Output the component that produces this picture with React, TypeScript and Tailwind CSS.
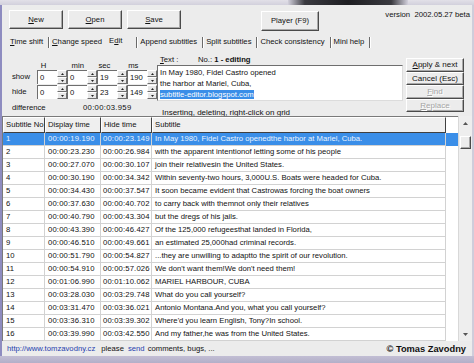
import React from "react";

const rows: [string, string, string, string][] = [
  ["1", "00:00:19.190", "00:00:23.149", "In May 1980, Fidel Castro openedthe harbor at Mariel, Cuba."],
  ["2", "00:00:23.230", "00:00:26.984", "with the apparent intentionof letting some of his people"],
  ["3", "00:00:27.070", "00:00:30.107", "join their relativesin the United States."],
  ["4", "00:00:30.190", "00:00:34.342", "Within seventy-two hours, 3,000U.S. Boats were headed for Cuba."],
  ["5", "00:00:34.430", "00:00:37.547", "It soon became evident that Castrowas forcing the boat owners"],
  ["6", "00:00:37.630", "00:00:40.702", "to carry back with themnot only their relatives"],
  ["7", "00:00:40.790", "00:00:43.304", "but the dregs of his jails."],
  ["8", "00:00:43.390", "00:00:46.427", "Of the 125,000 refugeesthat landed in Florida,"],
  ["9", "00:00:46.510", "00:00:49.661", "an estimated 25,000had criminal records."],
  ["10", "00:00:51.790", "00:00:54.827", "...they are unwilling to adaptto the spirit of our revolution."],
  ["11", "00:00:54.910", "00:00:57.026", "We don't want them!We don't need them!"],
  ["12", "00:01:06.990", "00:01:10.062", "MARIEL HARBOUR, CUBA"],
  ["13", "00:03:28.030", "00:03:29.748", "What do you call yourself?"],
  ["14", "00:03:31.470", "00:03:36.021", "Antonio Montana.And you, what you call yourself?"],
  ["15", "00:03:36.310", "00:03:39.302", "Where'd you learn English, Tony?In school."],
  ["16", "00:03:39.990", "00:03:42.550", "And my father,he was from the United States."],
];

function Raised({ className = "", children }: { className?: string; children?: React.ReactNode }) {
  return (
    <div
      className={
        "flex items-center justify-center bg-[#ececec] border border-t-white border-l-white border-r-[#4a4a4a] border-b-[#4a4a4a] shadow-[inset_-1px_-1px_0_#a8a8a8] " +
        className
      }
    >
      {children}
    </div>
  );
}

function Arrow({ up }: { up: boolean }) {
  return (
    <svg width="3" height="2" viewBox="0 0 3 2">
      <path d={up ? "M1.5 0L3 2H0z" : "M0 0H3L1.5 2z"} fill="#222" />
    </svg>
  );
}

function Spin() {
  return (
    <div className="flex flex-col w-[10px] h-[14px]">
      <div className="h-[7px] flex items-center justify-center bg-[#e8e8e8] border border-t-white border-l-white border-r-[#707070] border-b-[#707070]">
        <Arrow up />
      </div>
      <div className="h-[7px] flex items-center justify-center bg-[#e8e8e8] border border-t-white border-l-white border-r-[#707070] border-b-[#707070]">
        <Arrow up={false} />
      </div>
    </div>
  );
}

function TimeBox({ v }: { v: string }) {
  return (
    <div className="flex h-[14px] w-[30px]">
      <div className="w-[20px] h-full bg-white border-t border-l border-t-[#6e6e6e] border-l-[#6e6e6e] pl-[2px] leading-[13px]">
        {v}
      </div>
      <Spin />
    </div>
  );
}

function Sep() {
  return <div className="ml-[5px] mr-[2px] w-[2px] h-[11px] border-l border-r border-l-[#6a6a6a] border-r-white" />;
}

export default function App() {
  return (
    <div className="w-[474px] h-[363px] overflow-hidden flex flex-col bg-[#c9c6d6] font-['Liberation_Sans',Arial,sans-serif] text-[7.7px] text-[#111]">
      {/* top frame */}
      <div className="h-[5px] flex shrink-0">
        <div className="w-[288px] bg-[linear-gradient(180deg,#e2e0e8,#d2d0dc)]" />
        <div className="w-[120px] bg-[linear-gradient(90deg,#d2d0dc,#3a3a40_14%,#1e1e22_50%,#3a3a40_86%,#d2d0dc)]" />
        <div className="flex-1 bg-[linear-gradient(180deg,#e2e0e8,#d2d0dc)]" />
      </div>
      <div className="flex flex-1 min-h-0">
        {/* left frame */}
        <div className="w-[2px] bg-[#8e8cc0]" />
        {/* body */}
        <div className="w-[470px] bg-[#ececec] flex flex-col">
          {/* button row */}
          <div className="flex pt-[5px] pl-[7px] h-[26px]">
            <Raised className="w-[54px] h-[19px]">
              <span><u>N</u>ew</span>
            </Raised>
            <Raised className="w-[54px] h-[19px] ml-[5px]">
              <span><u>O</u>pen</span>
            </Raised>
            <Raised className="w-[54px] h-[19px] ml-[5px]">
              <span><u>S</u>ave</span>
            </Raised>
            <Raised className="w-[58px] h-[20px] ml-[80px] mt-[1px]">
              <span>Player (F9)</span>
            </Raised>
            <div className="ml-auto mr-[2px] leading-[10px]">version&nbsp; 2002.05.27 beta</div>
          </div>
          {/* tabs */}
          <div className="flex items-center h-[16px] mt-[3px] pl-[8px]">
            <span><u>T</u>ime shift</span>
            <Sep />
            <span><u>C</u>hange speed</span>
            <span className="ml-[7px] mr-[9px] -mt-[3px]">E<u>d</u>it</span>
            <Sep />
            <span>Append subtitles</span>
            <Sep />
            <span>Split subtitles</span>
            <Sep />
            <span>Check consistency</span>
            <Sep />
            <span>Mini help</span>
            <Sep />
          </div>
          {/* edit panel */}
          <div className="flex h-[66px]">
            {/* time inputs */}
            <div className="w-[155px] shrink-0 flex flex-col pt-[10px]">
              <div className="flex h-[10px] items-end leading-[9px]">
                <div className="w-[36px]" />
                <div className="w-[30px] pl-[3px]">H</div>
                <div className="w-[30px] pl-[4px]">min</div>
                <div className="w-[30px] pl-[1px]">sec</div>
                <div className="w-[30px] pl-[1px]">ms</div>
              </div>
              <div className="flex h-[15px] items-start">
                <div className="w-[36px] pl-[10px] leading-[14px]">show</div>
                <TimeBox v="0" />
                <TimeBox v="0" />
                <TimeBox v="19" />
                <TimeBox v="190" />
              </div>
              <div className="flex h-[15px] items-start">
                <div className="w-[36px] pl-[10px] leading-[14px]">hide</div>
                <TimeBox v="0" />
                <TimeBox v="0" />
                <TimeBox v="23" />
                <TimeBox v="149" />
              </div>
              <div className="flex h-[10px] mt-[3px] leading-[10px]">
                <div className="w-[81px] pl-[10px]">difference</div>
                <div className="tracking-[0.3px]">00:00:03.959</div>
              </div>
            </div>
            {/* memo */}
            <div className="w-[246px] shrink-0 flex flex-col pt-[5px]">
              <div className="flex h-[10px] leading-[10px] pl-[3px]">
                <span className="w-[38px]"><u>T</u>ext :</span>
                <span>No.: <b>1 - editing</b></span>
              </div>
              <div className="h-[37px] bg-white border border-t-[#6e6e6e] border-l-[#6e6e6e] border-r-[#dcdcdc] border-b-[#dcdcdc] pl-[2px] pt-[1px] leading-[11px]">
                <div>In May 1980, Fidel Castro opened</div>
                <div>the harbor at Mariel, Cuba,</div>
                <div>
                  <span className="bg-[#3a8ee8] text-white">subtitle-editor.blogspot.com</span>
                </div>
              </div>
              <div className="mt-[7px] pl-[5px] leading-[10px] text-[8px] whitespace-nowrap">Inserting, deleting, right-click on grid</div>
            </div>
            {/* right buttons */}
            <div className="w-[58px] shrink-0 ml-[3px] pt-[8px] flex flex-col text-[8px]">
              <Raised className="h-[14px]"><span><u>A</u>pply &amp; next</span></Raised>
              <Raised className="h-[13px]"><span>Cancel (Esc)</span></Raised>
              <Raised className="h-[14px]">
                <span className="text-[#a4a4a4] [text-shadow:1px_1px_0_#fff]"><u>F</u>ind</span>
              </Raised>
              <Raised className="h-[13px]">
                <span className="text-[#a4a4a4] [text-shadow:1px_1px_0_#fff]"><u>R</u>eplace</span>
              </Raised>
            </div>
          </div>
          {/* grid */}
          <div className="flex h-[225px]">
            <div className="w-[456px] flex flex-col bg-white border-t border-l border-t-[#7a7a7a] border-l-[#7a7a7a]">
              <div className="flex h-[16px] leading-[14px]">
                <div className="w-[42px] bg-[#efefef] border border-t-white border-l-white border-r-[#404040] border-b-[#404040] pl-[2px] whitespace-nowrap">Subtitle No</div>
                <div className="w-[56px] bg-[#efefef] border border-t-white border-l-white border-r-[#404040] border-b-[#404040] pl-[2px]">Display time</div>
                <div className="w-[51px] bg-[#efefef] border border-t-white border-l-white border-r-[#404040] border-b-[#404040] pl-[2px]">Hide time</div>
                <div className="w-[294px] bg-[#efefef] border border-t-white border-l-white border-r-[#404040] border-b-[#404040] pl-[2px]">Subtitle</div>
              </div>
              {rows.map((r, i) => (
                <div
                  key={r[0]}
                  className={"flex h-[13px] leading-[12px] " + (i === 0 ? "bg-[#3a8ee8] text-[#eaf4ff]" : "")}
                >
                  <div className="w-[42px] border-r border-b border-[#d2d2d2] pl-[3px]">{r[0]}</div>
                  <div className="w-[56px] border-r border-b border-[#d2d2d2] pl-[3px] whitespace-nowrap tracking-[0.15px]">{r[1]}</div>
                  <div className="w-[51px] border-r border-b border-[#d2d2d2] pl-[2px] whitespace-nowrap tracking-[0.15px]">{r[2]}</div>
                  <div className="w-[294px] border-r border-b border-[#d2d2d2] pl-[3px] whitespace-nowrap">{r[3]}</div>
                </div>
              ))}
            </div>
            {/* scrollbar */}
            <div className="w-[14px] flex flex-col bg-[#eeeeee] border-l border-[#d8d8d8]">
              <div className="h-[14px] flex items-center justify-center">
                <svg width="5" height="3" viewBox="0 0 5 3"><path d="M2.5 0L5 3H0z" fill="#555" /></svg>
              </div>
              <Raised className="h-[13px] mt-[6px] mx-[1px]" />
              <div className="flex-1" />
              <div className="h-[14px] flex items-center justify-center">
                <svg width="5" height="3" viewBox="0 0 5 3"><path d="M0 0H5L2.5 3z" fill="#555" /></svg>
              </div>
            </div>
          </div>
          {/* status */}
          <div className="flex items-center h-[15px] pl-[5px] pr-[6px] leading-[10px]">
            <span className="text-[#1f3fae]">http://www.tomzavodny.cz</span>
            <span className="ml-[6px]">please</span>
            <span className="ml-[4px] text-[#1f3fae]">send</span>
            <span className="ml-[3px]">comments, bugs, ...</span>
            <span className="ml-auto font-bold text-[9.3px]">© Tomas Zavodny</span>
          </div>
        </div>
        {/* right frame */}
        <div className="w-[2px] bg-[#cfcddb]" />
      </div>
      {/* bottom frame */}
      <div className="h-[7px] shrink-0 bg-[linear-gradient(180deg,#c2bed4,#b3afc8)]" />
    </div>
  );
}
